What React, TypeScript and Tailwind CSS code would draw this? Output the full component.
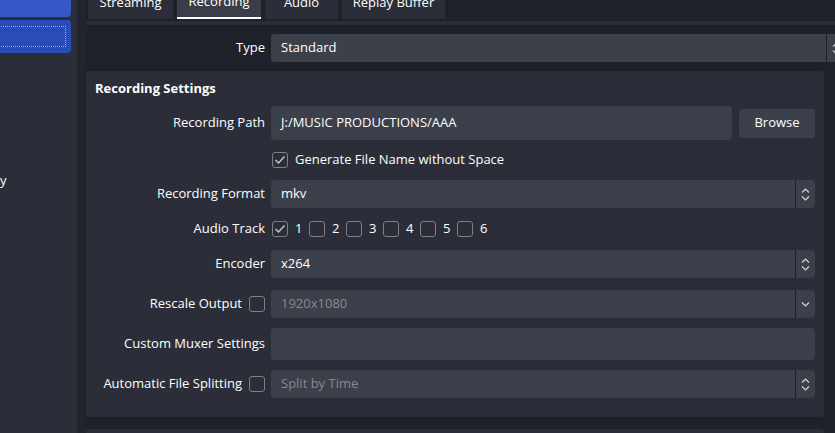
import React from "react";

const sideItems = ["Stream", "Output", "Audio", "Video", "Hotkeys", "Accessibility", "Advanced"];
const tabs = [
  { label: "Streaming", w: "w-[85px]" },
  { label: "Recording", w: "w-[84px]", active: true },
  { label: "Audio", w: "w-[73px]" },
  { label: "Replay Buffer", w: "w-[103px]" },
];

function Chevron({ up }: { up?: boolean }) {
  return (
    <svg width="9" height="5" viewBox="0 0 9 5" fill="none">
      <polyline
        points={up ? "1,4.5 4.5,1 8,4.5" : "1,0.5 4.5,4 8,0.5"}
        stroke="#d4d6dc"
        strokeWidth="1.2"
      />
    </svg>
  );
}

function Checkbox({ checked }: { checked?: boolean }) {
  return (
    <span className="flex h-[16px] w-[16px] shrink-0 items-center justify-center rounded-[3px] border border-[#7d8088]">
      {checked && (
        <svg width="12" height="12" viewBox="0 0 12 12" fill="none">
          <polyline points="1.5,6 4.5,9 10.5,2.5" stroke="#c9cbd1" strokeWidth="1.4" />
        </svg>
      )}
    </span>
  );
}

function Combo({
  value,
  disabled,
  downOnly,
}: {
  value: string;
  disabled?: boolean;
  downOnly?: boolean;
}) {
  return (
    <div className="flex h-[28px] flex-1 items-center rounded-[4px] bg-[#3c404b]">
      <span className={`flex-1 pl-[10px] ${disabled ? "text-[#868992]" : ""}`}>{value}</span>
      <div className="flex h-full w-[20px] flex-col items-center justify-center gap-[3px] border-l border-[#1f212a]">
        {!downOnly && <Chevron up />}
        <Chevron />
      </div>
    </div>
  );
}

function Row({ label, check, children }: { label: string; check?: boolean; children: React.ReactNode }) {
  return (
    <div className="flex items-center">
      <div className="flex w-[179px] shrink-0 items-center justify-end gap-[7px]">
        <span>{label}</span>
        {check && <Checkbox />}
      </div>
      <div className="ml-[6px] flex flex-1 items-center">{children}</div>
    </div>
  );
}

export default function App() {
  return (
    <div className="flex h-[433px] w-[835px] overflow-hidden bg-[#1f212a] font-['Open_Sans',sans-serif] text-[13px] text-[#fefefe]">
      {/* sidebar, scrolled so only tails show */}
      <aside className="w-[77px] shrink-0 overflow-hidden bg-[#2b2e38]">
        <div className="mt-[-16px] flex flex-col gap-[3px] pr-[6px]">
          {sideItems.map((item, i) => (
            <div
              key={item}
              className={`relative flex h-[33px] shrink-0 items-center rounded-r-[4px] ${
                i === 0 ? "bg-[#3558c6]" : i === 1 ? "bg-[#294cb8]" : ""
              }`}
            >
              <span className="ml-[-66px] whitespace-nowrap">{item}</span>
              {i === 1 && (
                <div className="absolute inset-y-[6px] left-[-20px] right-[5px] border border-dotted border-[#e0a84a]" />
              )}
            </div>
          ))}
        </div>
      </aside>
      <div className="w-[9px] shrink-0 bg-[#22242d]" />

      <main className="w-[749px] shrink-0">
        <div className="mt-[-14px] flex h-[33px] gap-[4px] pl-[2px]">
          {tabs.map((t) => (
            <div
              key={t.label}
              className={`flex items-center justify-center ${t.w} ${
                t.active ? "border-b-2 border-white bg-[#3b3e48]" : "bg-[#2b2e38]"
              }`}
            >
              {t.label}
            </div>
          ))}
        </div>
        <div className="mt-[2px] h-[4px] w-[760px] bg-[#2b2e38]" />

        <div className="mt-[9px] flex items-center">
          <div className="w-[179px] shrink-0 text-right">Type</div>
          <div className="ml-[6px] flex w-[575px] shrink-0">
            <Combo value="Standard" />
          </div>
        </div>

        <section className="mt-[9px] w-[738px] rounded-[4px] bg-[#2b2e39] pb-[19px] pr-[9px] pt-[8px]">
          <div className="h-[18px] pl-[9px] font-bold leading-[18px]">Recording Settings</div>
          <div className="mt-[9px] flex flex-col gap-[10px]">
            <Row label="Recording Path">
              <div className="flex h-[34px] flex-1 items-center rounded-[4px] bg-[#3c404b] pl-[10px]">
                J:/MUSIC PRODUCTIONS/AAA
              </div>
              <button className="ml-[7px] h-[29px] w-[76px] rounded-[4px] bg-[#3c404b]">Browse</button>
            </Row>
            <div className="flex h-[20px] items-center gap-[7px] pl-[186px]">
              <Checkbox checked />
              <span>Generate File Name without Space</span>
            </div>
            <Row label="Recording Format">
              <Combo value="mkv" />
            </Row>
            <Row label="Audio Track">
              <div className="flex h-[22px] items-center gap-[8px] pl-[1px]">
                {[1, 2, 3, 4, 5, 6].map((n) => (
                  <div key={n} className="flex items-center gap-[7px]">
                    <Checkbox checked={n === 1} />
                    <span className="w-[6px]">{n}</span>
                  </div>
                ))}
              </div>
            </Row>
            <Row label="Encoder">
              <Combo value="x264" />
            </Row>
            <div className="mt-[2px]">
              <Row label="Rescale Output" check>
                <Combo value="1920x1080" disabled downOnly />
              </Row>
            </div>
            <Row label="Custom Muxer Settings">
              <div className="h-[32px] flex-1 rounded-[4px] bg-[#3c404b]" />
            </Row>
            <Row label="Automatic File Splitting" check>
              <Combo value="Split by Time" disabled />
            </Row>
          </div>
        </section>
        <div className="mt-[12px] h-[40px] w-[738px] rounded-[4px] bg-[#2b2e39]" />
      </main>
    </div>
  );
}
